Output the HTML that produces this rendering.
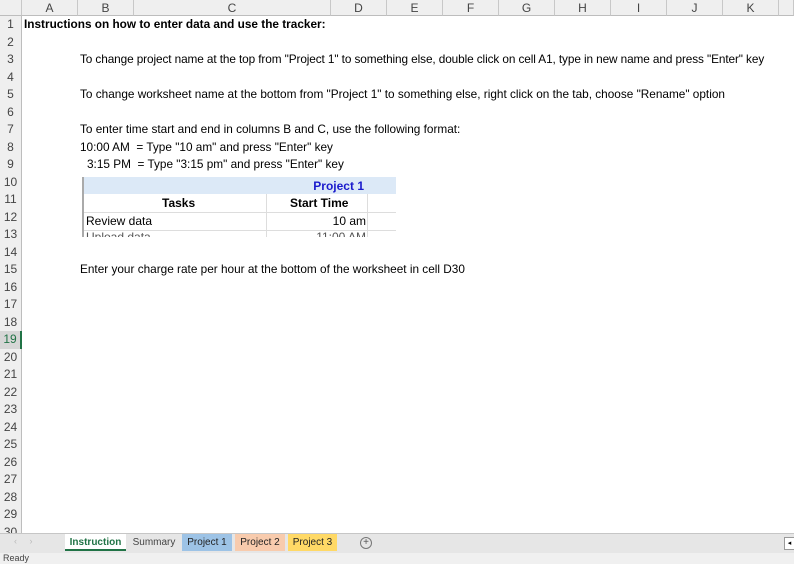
<!DOCTYPE html><html><head><style>
body{margin:0;width:794px;height:564px;overflow:hidden;background:#fff;font-family:"Liberation Sans",sans-serif;position:relative}
.a{position:absolute;white-space:nowrap}
.ch{position:absolute;top:0;height:16px;background:#efefef;border-right:1px solid #c8c8c8;border-bottom:1px solid #bdbdbd;box-sizing:border-box;font-size:12px;color:#444;text-align:center;line-height:16px}
.rh{position:absolute;left:0;width:22px;height:17.5px;line-height:17.5px;background:#efefef;border-right:1px solid #bdbdbd;box-sizing:border-box;font-size:12px;color:#444;text-align:center}
.t{font-size:11.8px;color:#000;line-height:17.5px}
.tab{position:absolute;top:534px;height:17px;font-size:10px;line-height:17px;text-align:center;color:#222}
</style></head><body>
<div class="ch" style="left:0;width:22px"></div>
<div class="ch" style="left:22px;width:56px">A</div>
<div class="ch" style="left:78px;width:56px">B</div>
<div class="ch" style="left:134px;width:197px">C</div>
<div class="ch" style="left:331px;width:56px">D</div>
<div class="ch" style="left:387px;width:56px">E</div>
<div class="ch" style="left:443px;width:56px">F</div>
<div class="ch" style="left:499px;width:56px">G</div>
<div class="ch" style="left:555px;width:56px">H</div>
<div class="ch" style="left:611px;width:56px">I</div>
<div class="ch" style="left:667px;width:56px">J</div>
<div class="ch" style="left:723px;width:56px">K</div>
<div class="ch" style="left:779px;width:15px"></div>
<div class="rh" style="top:16px">1</div>
<div class="rh" style="top:33.5px">2</div>
<div class="rh" style="top:51px">3</div>
<div class="rh" style="top:68.5px">4</div>
<div class="rh" style="top:86px">5</div>
<div class="rh" style="top:103.5px">6</div>
<div class="rh" style="top:121px">7</div>
<div class="rh" style="top:138.5px">8</div>
<div class="rh" style="top:156px">9</div>
<div class="rh" style="top:173.5px">10</div>
<div class="rh" style="top:191px">11</div>
<div class="rh" style="top:208.5px">12</div>
<div class="rh" style="top:226px">13</div>
<div class="rh" style="top:243.5px">14</div>
<div class="rh" style="top:261px">15</div>
<div class="rh" style="top:278.5px">16</div>
<div class="rh" style="top:296px">17</div>
<div class="rh" style="top:313.5px">18</div>
<div class="rh" style="top:331px;color:#217346;border-right:2px solid #217346;background:#d6d6d6">19</div>
<div class="rh" style="top:348.5px">20</div>
<div class="rh" style="top:366px">21</div>
<div class="rh" style="top:383.5px">22</div>
<div class="rh" style="top:401px">23</div>
<div class="rh" style="top:418.5px">24</div>
<div class="rh" style="top:436px">25</div>
<div class="rh" style="top:453.5px">26</div>
<div class="rh" style="top:471px">27</div>
<div class="rh" style="top:488.5px">28</div>
<div class="rh" style="top:506px">29</div>
<div class="rh" style="top:523.5px">30</div>
<div class="a t" style="left:24px;top:16px;font-weight:bold">Instructions on how to enter data and use the tracker:</div>
<div class="a t" style="left:80px;top:51px;letter-spacing:-0.1px">To change project name at the top from "Project 1" to something else, double click on cell A1, type in new name and press "Enter" key</div>
<div class="a t" style="left:80px;top:86px">To change worksheet name at the bottom from "Project 1" to something else, right click on the tab, choose "Rename" option</div>
<div class="a t" style="left:80px;top:121px">To enter time start and end in columns B and C, use the following format:</div>
<div class="a t" style="left:80px;top:138.5px">10:00 AM&nbsp; = Type "10 am" and press "Enter" key</div>
<div class="a t" style="left:87px;top:156px">3:15 PM&nbsp; = Type "3:15 pm" and press "Enter" key</div>
<div class="a t" style="left:80px;top:261px">Enter your charge rate per hour at the bottom of the worksheet in cell D30</div>
<div class="a" style="left:82px;top:177px;width:312px;height:60px;overflow:hidden;border-left:2px solid #aaa;font-size:12px">
<div style="height:17px;background:#dce9f7;position:relative"><span class="a" style="right:32px;top:2px;color:#1a1acc;font-weight:bold">Project 1</span></div>
<div style="height:18px;position:relative;border-bottom:1px solid #ddd"><span class="a" style="left:78px;top:2px;font-weight:bold">Tasks</span><span class="a" style="left:206px;top:2px;font-weight:bold">Start Time</span></div>
<div style="height:17px;position:relative;border-bottom:1px solid #ddd"><span class="a" style="left:2px;top:1px">Review data</span><span class="a" style="right:30px;top:1px">10 am</span></div>
<div class="a" style="left:182px;top:17px;width:1px;height:43px;background:#ddd"></div>
<div class="a" style="left:283px;top:17px;width:1px;height:43px;background:#ddd"></div>
<span class="a" style="left:2px;top:53px;color:#555">Upload data</span><span class="a" style="right:30px;top:53px;color:#555">11:00 AM</span>
</div>
<div class="a" style="left:0;top:533px;width:794px;height:19px;background:#e6e6e6;border-top:1px solid #c6c6c6;border-bottom:1px solid #d0d0d0"></div>
<div class="a" style="left:14px;top:536px;font-size:9px;color:#bbb">‹ &nbsp;&nbsp;&nbsp; ›</div>
<div class="tab" style="left:65px;width:61px;background:#fff;color:#217346;font-weight:bold;border-bottom:2px solid #217346;height:15px">Instruction</div>
<div class="tab" style="left:127px;width:54px;color:#444">Summary</div>
<div class="tab" style="left:182px;width:50px;background:#9dc3e6">Project 1</div>
<div class="tab" style="left:235px;width:50px;background:#f8cbad">Project 2</div>
<div class="tab" style="left:288px;width:49px;background:#ffd966">Project 3</div>
<div class="a" style="left:360px;top:537px;width:10px;height:10px;border:1px solid #777;border-radius:50%;font-size:10px;line-height:10px;text-align:center;color:#555">+</div>
<div class="a" style="left:784px;top:537px;width:9px;height:11px;border:1px solid #999;background:#fff;font-size:7px;line-height:11px;text-align:center">◂</div>
<div class="a" style="left:0;top:553px;width:794px;height:11px;background:#f0f0f0"></div>
<div class="a" style="left:3px;top:553px;font-size:9px;color:#444">Ready</div>
</body></html>
